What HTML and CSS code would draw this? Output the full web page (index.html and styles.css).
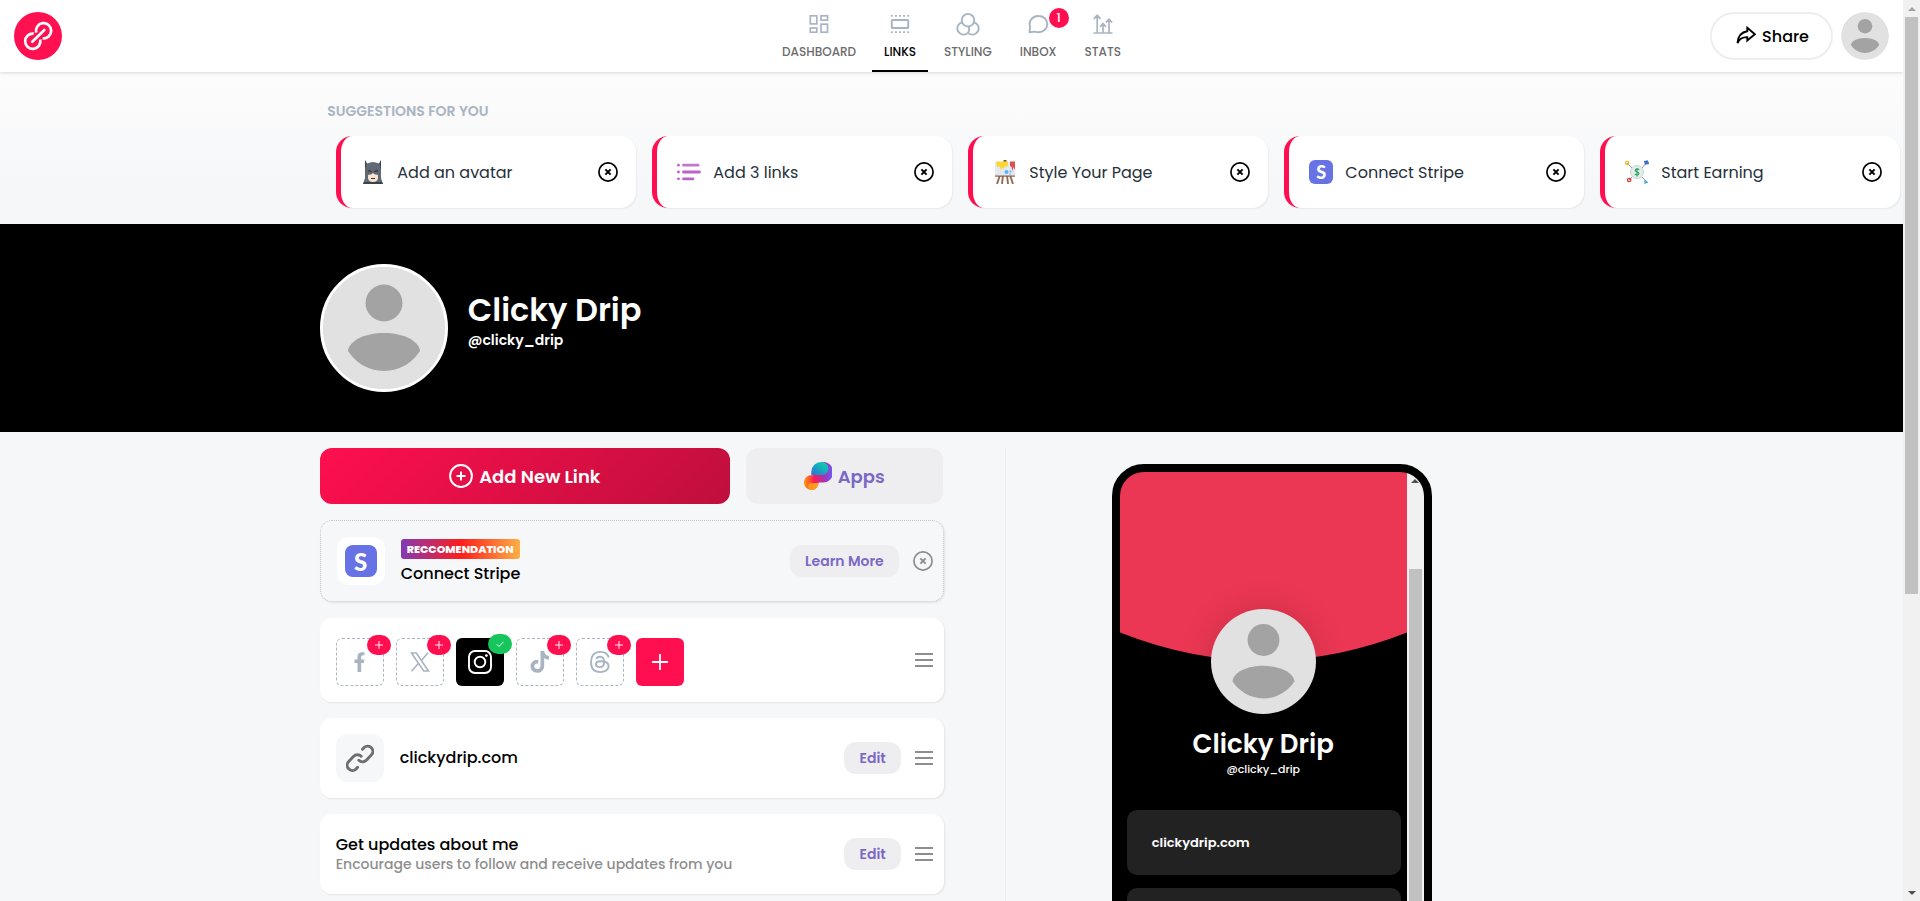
FILE: index.html
```html
<!DOCTYPE html>
<html lang="en">
<head>
<meta charset="utf-8">
<title>Links</title>
<link rel="stylesheet" href="styles.css">
</head>
<body>
<svg class="defs" aria-hidden="true">
  <symbol id="person" viewBox="3 3 122 122">
    <rect x="3" y="3" width="122" height="122" fill="#e1e1e1"/>
    <circle cx="64" cy="39" r="18.5" fill="#a3a3a3"/>
    <path d="M28 87C29 77 44 69 64 69S99 77 100 87C93 98 80 107 64 107S35 98 28 87Z" fill="#a3a3a3"/>
  </symbol>
  <symbol id="close" viewBox="0 0 20 20">
    <g fill="none" stroke="currentColor"><circle cx="10" cy="10" r="9.1" stroke-width="1.7"/><path d="M7.4 7.4l5.2 5.2M12.6 7.4l-5.2 5.2" stroke-width="2"/></g>
  </symbol>
  <symbol id="bars" viewBox="0 0 18 14"><path d="M0 1h18M0 7h18M0 13h18" stroke="currentColor" stroke-width="1.8"/></symbol>
  <symbol id="plus" viewBox="0 0 16 16"><path d="M8 0v16M0 8h16" stroke="currentColor" stroke-width="1.8"/></symbol>
</svg>
<div class="app">
  <div class="page">
    <header class="topbar">
      <a class="logo" href="#" aria-label="Home">
        <svg viewBox="0 0 48 48"><circle cx="24" cy="24" r="24" fill="#ff1050"/><g fill="none" stroke="#fff" stroke-width="2.7"><path d="M22.200 20.600A7.600 7.600 0 1 1 28.700 26.300"/><path d="M26.200 27.500A7.600 7.600 0 1 1 19.700 21.700"/><path d="M18.300 29.700L30.300 18" stroke-linecap="round"/></g></svg>
      </a>
      <nav class="tabs">
        <a class="tab" href="#"><svg viewBox="0 0 24 24"><g fill="none" stroke="currentColor" stroke-width="1.700"><rect x="3.300" y="3.800" width="6.500" height="8.100"/><rect x="14" y="3.800" width="6.500" height="4.300"/><rect x="3.300" y="16" width="6.500" height="4.200"/><rect x="14" y="12.200" width="6.500" height="8"/></g></svg>Dashboard</a>
        <a class="tab tab-active" href="#"><svg viewBox="0 0 24 24"><g fill="none" stroke="currentColor"><rect x="3.800" y="8" width="16.400" height="8" rx="0.600" stroke-width="1.900"/><path d="M3 3.900h18M3 20.100h18" stroke-width="1.700" stroke-dasharray="1.800 2.250"/></g></svg>Links</a>
        <a class="tab" href="#"><svg viewBox="0 0 24 24"><g fill="none" stroke="currentColor" stroke-width="1.900"><circle cx="12" cy="8.200" r="6.300"/><path d="M5.900 10.300A6.300 6.300 0 1 0 12 20.900 6.300 6.300 0 0 0 12.400 14.300"/><path d="M18.100 10.300A6.300 6.300 0 1 1 12 20.900"/></g></svg>Styling</a>
        <a class="tab" href="#"><svg viewBox="0 0 24 24"><path d="M3.600 20.200l.5-5.300A8.300 8.300 0 0 1 12.600 4C17.400 4 21.300 7.300 21.300 12S17.400 20.200 12.600 20.200c-1.200 0-2.300-.2-3.300-.6z" fill="none" stroke="currentColor" stroke-width="1.900"/></svg>Inbox<span class="count">1</span></a>
        <a class="tab" href="#"><svg viewBox="0 0 24 24"><path d="M2.500 21h19M6.200 21V3.500M2.800 6.800l3.400-3.500 3.400 3.500M12 21v-9M9 14.800l3-3.200 3 3.200M18 21V7.500M14.800 10.500L18 7.200l3.200 3.300" fill="none" stroke="currentColor" stroke-width="1.700"/></svg>Stats</a>
      </nav>
      <div class="account">
        <button class="share"><svg viewBox="0 0 20 20"><path d="M11.300 1.800l7.600 6.500-7.600 6.300v-3.500C6.800 11 3.500 12.600 1.500 17 2 10.800 5.300 6.200 11.300 5.300z" fill="none" stroke="#000" stroke-width="1.900"/></svg>Share</button>
        <button class="me" aria-label="Account"><svg><use href="#person"/></svg></button>
      </div>
    </header>

    <section class="suggestions">
      <h2>SUGGESTIONS FOR YOU</h2>
      <div class="track">
        <article class="tip"><svg class="tip-icon" viewBox="0 0 24 24"><path d="M2 24L4 18V.300L6.300 3.500Q12 .500 17.700 3.500L20 .300V18L22 24Z" fill="#616a72"/><path d="M2 24h20l-1-2H3z" fill="#3b444b"/><path d="M4 0v10l1.500-6zM20 0v10l-1.500-6z" fill="#3b444b"/><path d="M7 15l3.500-.8L12 13l1.500 1.200L17 15v3.500Q16 22 12 22T7 18.500z" fill="#fae3d3"/><path d="M10 18.500h4" stroke="#333"/><path d="M7 10.500l3.500 1.200M17 10.500l-3.500 1.200" stroke="#2d343a" stroke-width="1.300"/></svg><span>Add an avatar</span><button class="dismiss" aria-label="Dismiss"><svg><use href="#close"/></svg></button></article>
        <article class="tip"><svg class="tip-icon" viewBox="0 0 24 24"><g stroke="#ba62c8" stroke-width="2.800" stroke-linecap="round"><path d="M6.500 5.200H21" stroke="#c375cf"/><path d="M6.500 12H22.500M6.500 18.800H16M1.400 5.200h.1M1.400 12h.1M1.400 18.800h.1"/></g></svg><span>Add 3 links</span><button class="dismiss" aria-label="Dismiss"><svg><use href="#close"/></svg></button></article>
        <article class="tip"><svg class="tip-icon" viewBox="0 0 24 24"><path d="M7 15L4 24M10 15l-1 9M14 15l1 9M17 15l3 9" stroke="#8d6e55" stroke-width="1.900"/><rect x="2" y="2" width="20" height="14" fill="#e3e9f0"/><path d="M2 15.500h20v1.200H2z" fill="#8d5a45"/><path d="M10.500 0h3v2h-3z" fill="#665548"/><path d="M3 1.500h12v4l-2 1.500-1.500-1-.5 3-2-1-1 2.500-1-4-3 .5z" fill="#fdd536"/><path d="M17 1.500h5V10l-1.500-3-1 4-1-4L17 6z" fill="#df4f4c"/><circle cx="13.500" cy="12" r="2" fill="#5bb5f5"/><circle cx="17.500" cy="11.500" r="1" fill="#5bb5f5"/><circle cx="17" cy="14" r=".8" fill="#5bb5f5"/></svg><span>Style Your Page</span><button class="dismiss" aria-label="Dismiss"><svg><use href="#close"/></svg></button></article>
        <article class="tip"><b class="stripe stripe-small" aria-hidden="true">S</b><span>Connect Stripe</span><button class="dismiss" aria-label="Dismiss"><svg><use href="#close"/></svg></button></article>
        <article class="tip"><svg class="tip-icon" viewBox="0 0 24 24"><path d="M2 3l5 5M22 2l-5 6M4 20l4-4M22 22l-5-5" stroke="#8499b8"/><circle cx="12" cy="12" r="6.500" fill="#e5eaea" stroke="#ccd2d2"/><path d="M14.200 9.800q-2-1.500-3.500-.3-1 1.600 1 2.300 2.600.6 2 2.300-1.300 1.500-4 .1M12 8v8.500" stroke="#27a85c" stroke-width="1.200" fill="none"/><g fill="none" stroke-width="1.300"><circle cx="2.200" cy="3" r="1.600" stroke="#f3b61f"/><path d="M19.500 1l1 3 3-.5-1.500-3" fill="#3d6fcb" stroke="#3d6fcb"/><circle cx="4.200" cy="20" r="1.700" stroke="#dc3b3b"/><path d="M20 20v3l3-1" stroke="#38a8cc"/></g></svg><span>Start Earning</span><button class="dismiss" aria-label="Dismiss"><svg><use href="#close"/></svg></button></article>
      </div>
    </section>

    <section class="banner">
      <div class="wrap banner-in">
        <svg class="portrait"><use href="#person"/></svg>
        <div class="identity"><h1>Clicky Drip</h1><p>@clicky_drip</p></div>
      </div>
    </section>

    <main class="wrap columns">
      <div class="editor">
        <div class="actions">
          <button class="add"><svg viewBox="0 0 24 24"><g fill="none" stroke="#fff" stroke-width="2"><circle cx="12" cy="12" r="10.900"/><path d="M12 7.500v9M7.500 12h9"/></g></svg>Add New Link</button>
          <button class="apps">
            <svg viewBox="0 0 28 28"><defs><linearGradient id="a1" x1="0" x2="1"><stop stop-color="#ff9d0a"/><stop offset=".35" stop-color="#fb1a55"/><stop offset=".75" stop-color="#9a37c4"/><stop offset="1" stop-color="#6a62f5"/></linearGradient><linearGradient id="a2" x1="0" y1="1" x2="1" y2="0"><stop stop-color="#2c6fd6"/><stop offset="1" stop-color="#06e1a5"/></linearGradient></defs><path d="M18 0A10.300 10.300 0 1 1 18 20.500H14.500A7.300 7.300 0 1 1 7 13.300H9Z" fill="url(#a1)"/><path d="M7.300 13V10A10 10 0 0 1 17.500 0 7 7 0 0 1 24.500 7 6.300 6.300 0 0 1 18 13Z" fill="url(#a2)"/><path d="M8 21h6.500a7 7 0 0 1-7 7A3.500 3.500 0 0 1 8 21Z" fill="#ff9b18"/></svg>Apps</button>
        </div>

        <article class="card card-tip">
          <div class="tile tile-white"><b class="stripe" aria-hidden="true">S</b></div>
          <div class="grow"><span class="badge">RECCOMENDATION</span><h3>Connect Stripe</h3></div>
          <button class="pill">Learn More</button>
          <button class="dismiss faded" aria-label="Dismiss"><svg><use href="#close"/></svg></button>
        </article>

        <article class="card">
          <ul class="socials grow">
            <li><button class="social" aria-label="Facebook"><svg viewBox="0 0 24 24"><path d="M9.500 22V13H6.500V9.500h3V6.800C9.500 3.800 11.200 2.200 13.900 2.200c1.300 0 2.500.2 2.500.2v2.900h-1.400c-1.400 0-1.800.8-1.800 1.700v2.500h3.200L15.900 13h-2.700v9z" fill="currentColor"/></svg><i><svg><use href="#plus"/></svg></i></button></li>
            <li><button class="social" aria-label="X"><svg viewBox="0 0 24 24"><path d="M3.500 3h4.800L20.500 21h-4.800zM20 2.700L13 11M10.500 13.300L3.500 21.300" fill="none" stroke="currentColor" stroke-width="1.600"/></svg><i><svg><use href="#plus"/></svg></i></button></li>
            <li><button class="social social-on" aria-label="Instagram"><svg viewBox="0 0 24 24"><g fill="none" stroke="currentColor" stroke-width="1.900"><rect x="1" y="1" width="22" height="22" rx="6"/><circle cx="12" cy="12" r="5.300"/></g><circle cx="18.400" cy="5.600" r="1.400" fill="currentColor"/></svg><i class="ok"><svg viewBox="0 0 16 16"><path d="M1.500 8.500l4.500 4.500L15 3.500" fill="none" stroke="currentColor" stroke-width="1.800"/></svg></i></button></li>
            <li><button class="social" aria-label="TikTok"><svg viewBox="0 0 24 24"><path d="M12.500 1h3.700c.3 2.800 2 4.700 4.800 4.900v3.700c-1.800 0-3.400-.5-4.800-1.500v7.300c0 4.600-3.200 7.400-7.100 7.400-3.800 0-6.600-2.900-6.600-6.500 0-4 3.300-7.100 7.800-6.600v3.800c-2.300-.5-4 .9-4 2.800 0 1.600 1.300 2.800 2.900 2.800 1.900 0 3.300-1.200 3.300-3.700z" fill="currentColor"/></svg><i><svg><use href="#plus"/></svg></i></button></li>
            <li><button class="social" aria-label="Threads"><svg viewBox="0 0 24 24"><path d="M20.700 7.500C19.700 3.500 16.500 1.900 12.300 1.900 6 1.900 3 6 3 12s3 10.100 9.300 10.100c4.700 0 8.300-2.500 8.300-5.800 0-3.400-3.600-5-8-5-3 0-4.700 1.200-4.700 3 0 1.700 1.500 2.800 3.600 2.800 3.200 0 4.700-2.200 4.700-5.200 0-3.300-1.500-5.100-4.200-5.100-1.800 0-3 .7-3.800 2" fill="none" stroke="currentColor" stroke-width="1.900"/></svg><i><svg><use href="#plus"/></svg></i></button></li>
            <li><button class="social social-add" aria-label="Add social link"><svg viewBox="0 0 16 16"><use href="#plus"/></svg></button></li>
          </ul>
          <button class="drag" aria-label="Reorder"><svg><use href="#bars"/></svg></button>
        </article>

        <article class="card">
          <div class="tile"><svg viewBox="0 0 28 28"><g fill="none" stroke="#6e6e6e" stroke-width="2.900" stroke-linecap="round"><path d="M16.500 5.300l1.600-1.800a5.200 5.200 0 0 1 7.200 7.500l-5 5.300a5.200 5.200 0 0 1-7.500 0"/><path d="M15.200 12.300a5.200 5.200 0 0 0-7.500 0l-5 5.300a5.200 5.200 0 0 0 7.200 7.500l1.700-1.800"/></g></svg></div>
          <div class="grow"><h3>clickydrip.com</h3></div>
          <button class="pill">Edit</button>
          <button class="drag" aria-label="Reorder"><svg><use href="#bars"/></svg></button>
        </article>

        <article class="card">
          <div class="grow"><h3>Get updates about me</h3><p>Encourage users to follow and receive updates from you</p></div>
          <button class="pill">Edit</button>
          <button class="drag" aria-label="Reorder"><svg><use href="#bars"/></svg></button>
        </article>
      </div>

      <aside class="preview">
        <div class="phone">
          <div class="screen">
            <svg class="cover" viewBox="0 0 287 189" preserveAspectRatio="none"><path d="M0 0H287V160.500Q143.500 217 0 160.500Z" fill="#eb3753"/></svg>
            <svg class="face"><use href="#person"/></svg>
            <h2>Clicky Drip</h2>
            <p>@clicky_drip</p>
            <a class="link" href="#">clickydrip.com</a>
            <a class="link" href="#" aria-label="Subscribe"></a>
          </div>
          <div class="rail rail-phone"><span class="arrow"></span><span class="thumb"></span></div>
        </div>
      </aside>
    </main>
  </div>
  <div class="rail"><span class="arrow arrow-off"></span><span class="thumb"></span><span class="arrow arrow-down"></span></div>
</div>
</body>
</html>
```

FILE: styles.css
```css
* { box-sizing: border-box; }
body { margin: 0; font-family: Poppins, Inter, "Open Sans", sans-serif; font-weight: 500; color: #000; background: #f6f7f9; }
h1, h2, h3, p, ul { margin: 0; padding: 0; }
button { font: inherit; color: inherit; border: 0; padding: 0; background: none; cursor: pointer; }
a { color: inherit; text-decoration: none; }
svg { display: block; flex: none; }
.defs { position: absolute; width: 0; height: 0; }

.app { display: flex; height: 100vh; overflow: hidden; }
.page { flex: 1; min-width: 0; overflow: hidden; }
.wrap { width: 66.4%; margin: 0 auto; }
.grow { flex: 1; min-width: 0; }

.topbar { position: relative; display: grid; grid-template-columns: 1fr auto 1fr; align-items: center; height: 72px; padding: 0 14px; background: #fff; box-shadow: 0 1px 3px rgba(0, 0, 0, .15); }
.logo, .logo svg { width: 48px; height: 48px; }
.tabs { display: flex; gap: 4px; height: 72px; }
.tab { position: relative; display: flex; flex-direction: column; align-items: center; gap: 6px; padding: 12px 12px 0; border-bottom: 2px solid transparent; font-size: 12px; line-height: 20px; text-transform: uppercase; color: #6b6b6b; }
.tab svg { width: 24px; height: 24px; color: #a9b4c2; }
.tab-active { color: #000; border-color: #000; }
.count { position: absolute; top: 8px; right: 0; width: 20px; height: 20px; border-radius: 10px; background: #ff0f4f; color: #fff; text-align: center; }
.account { display: flex; justify-content: flex-end; gap: 8px; }
.share { display: flex; align-items: center; gap: 6px; height: 48px; padding: 0 22px 0 24px; border: 2px solid #eee; border-radius: 24px; font-size: 16px; font-weight: 500; }
.share svg { width: 20px; height: 20px; }
.me, .me svg { width: 48px; height: 48px; border-radius: 50%; overflow: hidden; }

.suggestions { padding: 29px 0 16px 17.2%; background: linear-gradient(#fcfcfc, #f6f7f9 80%); }
.suggestions h2 { font-size: 14px; line-height: 20px; font-weight: 600; color: #a9b4c2; }
.track { display: flex; gap: 16px; padding: 15px 0 0 9px; }
.tip { display: flex; flex: none; align-items: center; gap: 12px; width: 300px; height: 72px; padding: 0 18px 0 20px; border-left: 5px solid #ff0f4f; border-radius: 16px; background: #fff; box-shadow: 1px 1px 2px rgba(0, 0, 0, .06); font-size: 16px; font-weight: 400; color: #25303b; }
.tip span { flex: 1; }
.tip-icon { width: 24px; height: 24px; }
.stripe { display: flex; align-items: center; justify-content: center; width: 32px; height: 32px; border-radius: 8px; background: #6772e5; color: #fff; font: 900 24px Lato, sans-serif; }
.stripe-small { width: 24px; height: 24px; border-radius: 6px; font-size: 18px; }
.dismiss, .dismiss svg { width: 20px; height: 20px; color: #000; }
.faded svg { color: #8e8e8e; }

.banner { background: #000; color: #fff; }
.banner-in { display: flex; align-items: center; gap: 20px; padding: 40px 0; }
.portrait { width: 128px; height: 128px; border: 3px solid #fff; border-radius: 50%; background: #e1e1e1; }
.identity { padding-bottom: 16px; }
.banner h1 { font-size: 32px; line-height: 40px; font-weight: 600; }
.banner p { font-size: 14px; line-height: 20px; font-weight: 600; }

.columns { display: flex; }
.editor { flex: 0 0 686px; padding-right: 61px; margin-top: 16px; border-right: 1px solid #ebecef; }
.actions { display: grid; grid-template-columns: 25fr 12fr; gap: 16px; padding-right: 1px; }
.add, .apps { display: flex; align-items: center; justify-content: center; gap: 6px; height: 56px; border-radius: 12px; font-size: 18px; font-weight: 600; }
.add { background: linear-gradient(135deg, #ff0f4f, #be0f3c); color: #fff; }
.add svg { width: 24px; height: 24px; }
.apps { background: #eeeef0; color: #7b68c5; }
.apps svg { width: 28px; height: 28px; }

.card { display: flex; align-items: center; gap: 14px; min-height: 80px; margin-top: 16px; padding: 16px 11px 16px 16px; border-radius: 12px; background: #fff; box-shadow: 1px 1px 2px rgba(0, 0, 0, .08); }
.card-tip { border: 1px dotted #c3c6ca; background: #f6f7f9; padding-right: 10px; }
.card h3 { font-size: 16px; line-height: 20px; font-weight: 500; }
.card p { font-size: 14px; line-height: 18px; font-weight: 500; color: #8e8e8e; }
.tile { display: flex; align-items: center; justify-content: center; width: 48px; height: 48px; margin-right: 2px; border-radius: 12px; background: #f6f7f9; }
.tile svg { width: 28px; height: 28px; }
.tile-white { background: #fff; }
.badge { display: inline-block; margin-bottom: 4px; padding: 0 6px; border-radius: 3px; background: linear-gradient(90deg, #833ab4, #fd1d1d 50%, #fcb045); color: #fff; font-size: 11px; line-height: 20px; font-weight: 800; vertical-align: top; }
.pill { height: 32px; padding: 0 15px; border-radius: 12px; background: #eeeef0; color: #7b68c5; font-size: 14px; font-weight: 600; }
.drag svg { width: 18px; height: 14px; color: #8e8e8e; }
.socials { display: flex; gap: 12px; padding-top: 4px; list-style: none; }
.social { position: relative; display: flex; align-items: center; justify-content: center; width: 48px; height: 48px; border: 1px dashed #a9b4c2; border-radius: 6px; color: #a9b4c2; }
.social > svg { width: 24px; height: 24px; }
.social i { position: absolute; top: -4px; right: -8px; display: flex; align-items: center; justify-content: center; width: 24px; height: 20px; border-radius: 10px; background: #ff0f4f; color: #fff; }
.social i svg { width: 8px; height: 8px; }
.social .ok { background: #16c55b; }
.social-on { border: 0; background: #000; color: #fff; }
.social-add { border: 0; background: #ff0f4f; color: #fff; }
.social-add > svg { width: 16px; height: 16px; }

.preview { flex: 1; padding: 32px 0 0 106px; }
.phone { display: flex; width: 320px; height: 640px; border: 8px solid #000; border-radius: 32px; background: #000; overflow: hidden; }
.screen { flex: 1; display: flex; flex-direction: column; align-items: center; color: #fff; }
.cover { width: 100%; height: 189px; }
.face { width: 105px; height: 105px; margin-top: -52px; border-radius: 50%; box-shadow: 0 0 32px rgba(0, 0, 0, .15); }
.screen h2 { margin-top: 14px; font-size: 26px; line-height: 32px; font-weight: 600; }
.screen p { font-size: 11px; line-height: 18px; margin-bottom: 32px; }
.link { flex: none; align-self: stretch; height: 65px; margin: 0 6px 13px 7px; padding: 0 25px; border-radius: 10px; background: #222; font-size: 13px; line-height: 65px; font-weight: 600; }

.rail { display: flex; flex-direction: column; align-items: center; width: 17px; background: #f1f1f1; }
.arrow { flex: none; width: 0; height: 0; margin-bottom: 6px; border: 4px solid transparent; border-top-width: 7px; border-bottom-color: #505050; }
.arrow-off { border-bottom-color: #a3a3a3; }
.arrow-down { margin: auto 0 2px; border: 4px solid transparent; border-top-color: #505050; }
.thumb { width: 13px; height: 64%; background: #c1c1c1; }
.rail-phone .thumb { height: 100%; margin-top: 80px; }
```
